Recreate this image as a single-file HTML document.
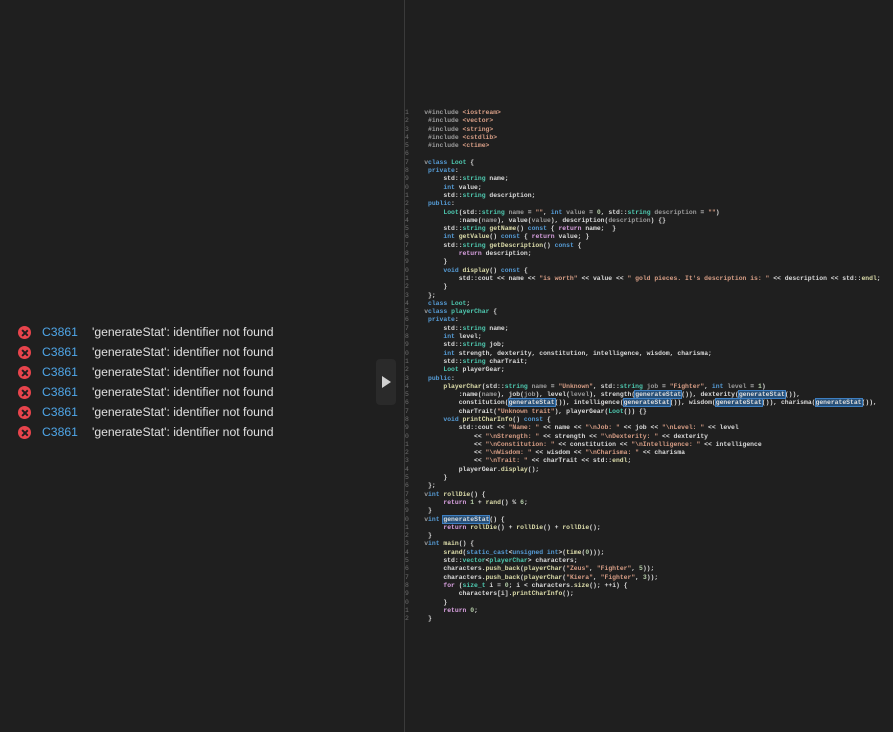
<!DOCTYPE html>
<html><head><meta charset="utf-8"><style>
body{margin:0;width:893px;height:732px;background:#1f1f1f;overflow:hidden;position:relative;font-family:"Liberation Sans",sans-serif}
.div{position:absolute;left:404px;top:0;width:1px;height:732px;background:#3a3a3a}
.err{position:absolute;left:18px;height:20px;font-size:12.2px;color:#e0e0e0;white-space:nowrap}
.err .i{position:absolute;left:0;top:0px;width:13px;height:13px;border-radius:50%;background:#e8444c}
.err .i:before,.err .i:after{content:"";position:absolute;left:5.7px;top:2.5px;width:1.6px;height:8px;background:#1f1f1f;transform:rotate(45deg)}
.err .i:after{transform:rotate(-45deg)}
.err .c{position:absolute;left:24px;top:-1px;color:#4fa6e8}
.err .m{position:absolute;left:74px;top:-1px}
.play{position:absolute;left:376px;top:359px;width:20px;height:46px;background:#2a2a2a;border-radius:4px}
.play:after{content:"";position:absolute;left:6px;top:17px;border-left:9px solid #d0d0d0;border-top:6px solid transparent;border-bottom:6px solid transparent}
.code{position:absolute;left:405px;top:109px;font-family:"Liberation Mono",monospace;font-size:6.4px;line-height:8.3px;color:#dcdcdc;white-space:pre;font-weight:bold}
.ln{position:absolute;left:405px;top:109px;font-family:"Liberation Mono",monospace;font-size:6.4px;line-height:8.3px;color:#6e6e6e;white-space:pre}
.k{color:#569cd6}.t{color:#4ec9b0}.f{color:#dcdcaa}.s{color:#d69d85}.v{color:#dadada}.p{color:#d8a0df}.g{color:#9b9b9b}.n{color:#b5cea8}
.h{outline:1px solid #3e7fc1;background:#264f78}
</style></head><body>
<div class="div"></div>
<div class="err" style="top:326px"><span class="i"></span><span class="c">C3861</span><span class="m">'generateStat': identifier not found</span></div>
<div class="err" style="top:346px"><span class="i"></span><span class="c">C3861</span><span class="m">'generateStat': identifier not found</span></div>
<div class="err" style="top:366px"><span class="i"></span><span class="c">C3861</span><span class="m">'generateStat': identifier not found</span></div>
<div class="err" style="top:386px"><span class="i"></span><span class="c">C3861</span><span class="m">'generateStat': identifier not found</span></div>
<div class="err" style="top:406px"><span class="i"></span><span class="c">C3861</span><span class="m">'generateStat': identifier not found</span></div>
<div class="err" style="top:426px"><span class="i"></span><span class="c">C3861</span><span class="m">'generateStat': identifier not found</span></div>
<div class="play"></div>
<div class="ln">1
2
3
4
5
6
7
8
9
0
1
2
3
4
5
6
7
8
9
0
1
2
3
4
5
6
7
8
9
0
1
2
3
4
5
6
7
8
9
0
1
2
3
4
5
6
7
8
9
0
1
2
3
4
5
6
7
8
9
0
1
2</div>
<div class="code">     <span class="g">v#include</span> <span class="s">&lt;iostream&gt;</span>
      <span class="g">#include</span> <span class="s">&lt;vector&gt;</span>
      <span class="g">#include</span> <span class="s">&lt;string&gt;</span>
      <span class="g">#include</span> <span class="s">&lt;cstdlib&gt;</span>
      <span class="g">#include</span> <span class="s">&lt;ctime&gt;</span>

     <span class="g">v</span><span class="k">class</span> <span class="t">Loot</span> {
      <span class="k">private</span>:
          std::<span class="t">string</span> <span class="v">name</span>;
          <span class="k">int</span> <span class="v">value</span>;
          std::<span class="t">string</span> <span class="v">description</span>;
      <span class="k">public</span>:
          <span class="t">Loot</span>(std::<span class="t">string</span> <span class="g">name</span> = <span class="s">""</span>, <span class="k">int</span> <span class="g">value</span> = <span class="n">0</span>, std::<span class="t">string</span> <span class="g">description</span> = <span class="s">""</span>)
              :<span class="v">name</span>(<span class="g">name</span>), <span class="v">value</span>(<span class="g">value</span>), <span class="v">description</span>(<span class="g">description</span>) {}
          std::<span class="t">string</span> <span class="f">getName</span>() <span class="k">const</span> { <span class="p">return</span> <span class="v">name</span>;  }
          <span class="k">int</span> <span class="f">getValue</span>() <span class="k">const</span> { <span class="p">return</span> <span class="v">value</span>; }
          std::<span class="t">string</span> <span class="f">getDescription</span>() <span class="k">const</span> {
              <span class="p">return</span> <span class="v">description</span>;
          }
          <span class="k">void</span> <span class="f">display</span>() <span class="k">const</span> {
              std::<span class="v">cout</span> &lt;&lt; <span class="v">name</span> &lt;&lt; <span class="s">"is worth"</span> &lt;&lt; <span class="v">value</span> &lt;&lt; <span class="s">" gold pieces. It's description is: "</span> &lt;&lt; <span class="v">description</span> &lt;&lt; std::<span class="f">endl</span>;
          }
      };
      <span class="k">class</span> <span class="t">Loot</span>;
     <span class="g">v</span><span class="k">class</span> <span class="t">playerChar</span> {
      <span class="k">private</span>:
          std::<span class="t">string</span> <span class="v">name</span>;
          <span class="k">int</span> <span class="v">level</span>;
          std::<span class="t">string</span> <span class="v">job</span>;
          <span class="k">int</span> <span class="v">strength</span>, <span class="v">dexterity</span>, <span class="v">constitution</span>, <span class="v">intelligence</span>, <span class="v">wisdom</span>, <span class="v">charisma</span>;
          std::<span class="t">string</span> <span class="v">charTrait</span>;
          <span class="t">Loot</span> <span class="v">playerGear</span>;
      <span class="k">public</span>:
          <span class="f">playerChar</span>(std::<span class="t">string</span> <span class="g">name</span> = <span class="s">"Unknown"</span>, std::<span class="t">string</span> <span class="g">job</span> = <span class="s">"Fighter"</span>, <span class="k">int</span> <span class="g">level</span> = <span class="n">1</span>)
              :<span class="v">name</span>(<span class="g">name</span>), <span class="v">job</span>(<span class="g">job</span>), <span class="v">level</span>(<span class="g">level</span>), <span class="v">strength</span>(<span class="h">generateStat</span>()), <span class="v">dexterity</span>(<span class="h">generateStat</span>()),
              <span class="v">constitution</span>(<span class="h">generateStat</span>()), <span class="v">intelligence</span>(<span class="h">generateStat</span>()), <span class="v">wisdom</span>(<span class="h">generateStat</span>()), <span class="v">charisma</span>(<span class="h">generateStat</span>()),
              <span class="v">charTrait</span>(<span class="s">"Unknown trait"</span>), <span class="v">playerGear</span>(<span class="t">Loot</span>()) {}
          <span class="k">void</span> <span class="f">printCharInfo</span>() <span class="k">const</span> {
              std::<span class="v">cout</span> &lt;&lt; <span class="s">"Name: "</span> &lt;&lt; <span class="v">name</span> &lt;&lt; <span class="s">"\nJob: "</span> &lt;&lt; <span class="v">job</span> &lt;&lt; <span class="s">"\nLevel: "</span> &lt;&lt; <span class="v">level</span>
                  &lt;&lt; <span class="s">"\nStrength: "</span> &lt;&lt; <span class="v">strength</span> &lt;&lt; <span class="s">"\nDexterity: "</span> &lt;&lt; <span class="v">dexterity</span>
                  &lt;&lt; <span class="s">"\nConstitution: "</span> &lt;&lt; <span class="v">constitution</span> &lt;&lt; <span class="s">"\nIntelligence: "</span> &lt;&lt; <span class="v">intelligence</span>
                  &lt;&lt; <span class="s">"\nWisdom: "</span> &lt;&lt; <span class="v">wisdom</span> &lt;&lt; <span class="s">"\nCharisma: "</span> &lt;&lt; <span class="v">charisma</span>
                  &lt;&lt; <span class="s">"\nTrait: "</span> &lt;&lt; <span class="v">charTrait</span> &lt;&lt; std::<span class="f">endl</span>;
              <span class="v">playerGear</span>.<span class="f">display</span>();
          }
      };
     <span class="g">v</span><span class="k">int</span> <span class="f">rollDie</span>() {
          <span class="p">return</span> <span class="n">1</span> + <span class="f">rand</span>() % <span class="n">6</span>;
      }
     <span class="g">v</span><span class="k">int</span> <span class="h">generateStat</span>() {
          <span class="p">return</span> <span class="f">rollDie</span>() + <span class="f">rollDie</span>() + <span class="f">rollDie</span>();
      }
     <span class="g">v</span><span class="k">int</span> <span class="f">main</span>() {
          <span class="f">srand</span>(<span class="k">static_cast</span>&lt;<span class="k">unsigned int</span>&gt;(<span class="f">time</span>(<span class="n">0</span>)));
          std::<span class="t">vector</span>&lt;<span class="t">playerChar</span>&gt; <span class="v">characters</span>;
          <span class="v">characters</span>.<span class="f">push_back</span>(<span class="f">playerChar</span>(<span class="s">"Zeus"</span>, <span class="s">"Fighter"</span>, <span class="n">5</span>));
          <span class="v">characters</span>.<span class="f">push_back</span>(<span class="f">playerChar</span>(<span class="s">"Kiera"</span>, <span class="s">"Fighter"</span>, <span class="n">3</span>));
          <span class="p">for</span> (<span class="t">size_t</span> <span class="v">i</span> = <span class="n">0</span>; <span class="v">i</span> &lt; <span class="v">characters</span>.<span class="f">size</span>(); ++<span class="v">i</span>) {
              <span class="v">characters</span>[<span class="v">i</span>].<span class="f">printCharInfo</span>();
          }
          <span class="p">return</span> <span class="n">0</span>;
      }</div>
</body></html>
